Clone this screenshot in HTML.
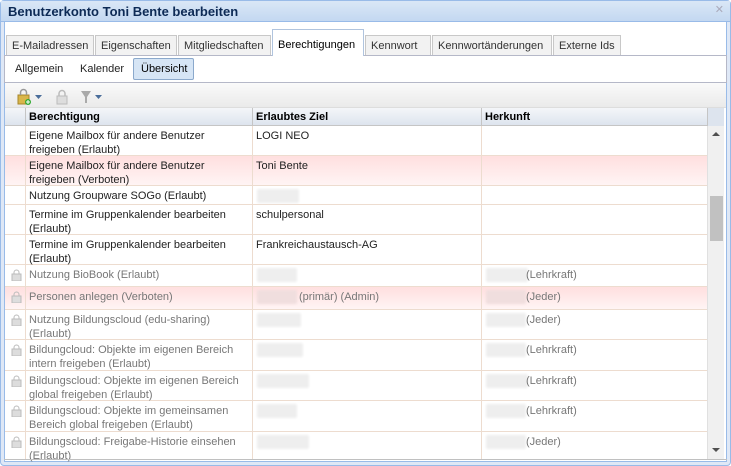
<!DOCTYPE html>
<html><head><meta charset="utf-8"><style>
*{margin:0;padding:0;box-sizing:border-box}
body{width:731px;height:466px;background:#fff;font-family:"Liberation Sans",Tahoma,sans-serif;font-size:11px;color:#222;position:relative;overflow:hidden}
.a{position:absolute}
.win{left:0;top:0;width:731px;height:466px;border:1px solid #99bbe8;border-radius:4px;background:#dfe8f6}
.title{left:1px;top:1px;width:729px;height:21px;background:linear-gradient(#dae7f6,#c3d8f1);border-bottom:1px solid #99bbe8}
.title b{position:absolute;left:7px;top:3px;font-size:13px;color:#0d2a55}
.body{left:4px;top:22px;width:723px;height:440px;background:#fff;border:1px solid #99bbe8;border-top:none}
.tab{top:35px;height:20px;border:1px solid #c8c8c8;border-bottom:none;background:#f2f2f2;color:#333;padding:4px 5px 0;white-space:nowrap;font-size:11px}
.tab.act{top:29px;height:27px;background:#fff;border-color:#b0c4de;padding-top:9px;color:#000}
.sub{left:4px;top:55px;width:723px;height:28px;border:1px solid #b5b8c8;background:#fff}
.tb{left:5px;top:83px;width:721px;height:25px;background:linear-gradient(#fafafa,#eaeaea);border-bottom:1px solid #ddd}
.hdr{left:5px;top:108px;width:703px;height:18px;background:linear-gradient(#f4f6f9,#dde4ee);border-bottom:1px solid #c5c5c5;font-weight:bold;color:#000}
.hdr span{position:absolute;top:3px}
.row{left:5px;width:703px;border-bottom:1px solid #eddccf;background:#fff}
.row.pk{background:linear-gradient(#ffdfdf,#fff4f4)}
.c1,.c2,.c3{position:absolute;top:3px;line-height:14px;white-space:nowrap}
.c1{left:24px}
.c2{left:251px}
.c3{left:480px}
.g{color:#777}
.bl{position:absolute;top:3px;height:14px;background:#eee;border-radius:2px;filter:blur(1px)}
.vl{position:absolute;top:108px;height:351px;width:1px;background:#eddccf}
.lock{position:absolute;left:6px;top:4px;width:11px;height:12px}
</style></head><body>
<div class="a win"></div>
<div class="a title"><b>Benutzerkonto Toni Bente bearbeiten</b><span style="position:absolute;right:6px;top:2px;color:#aab;font-size:11px">✕</span></div>
<div class="a body"></div>
<div class="a tab" style="left:6px;width:88px">E-Mailadressen</div>
<div class="a tab" style="left:95px;width:82px">Eigenschaften</div>
<div class="a tab" style="left:178px;width:93px">Mitgliedschaften</div>
<div class="a tab" style="left:365px;width:66px">Kennwort</div>
<div class="a tab" style="left:432px;width:120px">Kennwortänderungen</div>
<div class="a tab" style="left:553px;width:68px">Externe Ids</div>
<div class="a sub"></div>
<div class="a tab act" style="left:272px;width:92px">Berechtigungen</div>
<div class="a" style="left:15px;top:63px;color:#222">Allgemein</div>
<div class="a" style="left:80px;top:63px;color:#222">Kalender</div>
<div class="a" style="left:133px;top:58px;width:61px;height:22px;border:1px solid #8ba9cc;border-radius:2px;background:#d6e5f5;padding:4px 0 0 7px;color:#000">Übersicht</div>
<div class="a tb"></div>
<svg class="a" style="left:16px;top:88px" width="94" height="18">
<rect x="2" y="7" width="11" height="9" fill="#d9b64a" stroke="#a8862a"/><path d="M4.5 7V4.5a3 3 0 0 1 6 0V7" fill="none" stroke="#999" stroke-width="1.5"/>
<circle cx="12" cy="14" r="3" fill="#3a3"/><path d="M10 14h4M12 12v4" stroke="#fff"/>
<path d="M19 7h7l-3.5 4z" fill="#4a6d9a"/>
<rect x="41" y="8" width="10" height="8" fill="#ddd" stroke="#bbb"/><path d="M43 8V5.5a3 3 0 0 1 6 0V8" fill="none" stroke="#bbb" stroke-width="1.5"/>
<path d="M65 3h10l-4 6v6h-2V9z" fill="#aaa"/>
<path d="M79 7h7l-3.5 4z" fill="#4a6d9a"/>
</svg>
<div class="a hdr"><span style="left:24px">Berechtigung</span><span style="left:251px">Erlaubtes Ziel</span><span style="left:480px">Herkunft</span></div>
<div class="a" style="left:707px;top:108px;width:17px;height:18px;background:#dde4ee;border-left:1px solid #c5c5c5"></div>

<div class="a row" style="top:126px;height:30px"><div class="c1">Eigene Mailbox für andere Benutzer<br>freigeben (Erlaubt)</div><div class="c2">LOGI NEO</div></div>
<div class="a row pk" style="top:156px;height:30px"><div class="c1">Eigene Mailbox für andere Benutzer<br>freigeben (Verboten)</div><div class="c2">Toni Bente</div></div>
<div class="a row" style="top:186px;height:19px"><div class="c1">Nutzung Groupware SOGo (Erlaubt)</div><div class="bl" style="left:252px;width:42px"></div></div>
<div class="a row" style="top:205px;height:30px"><div class="c1">Termine im Gruppenkalender bearbeiten<br>(Erlaubt)</div><div class="c2">schulpersonal</div></div>
<div class="a row" style="top:235px;height:30px"><div class="c1">Termine im Gruppenkalender bearbeiten<br>(Erlaubt)</div><div class="c2">Frankreichaustausch-AG</div></div>
<div class="a row g" style="top:265px;height:22px"><svg class="lock"><rect x="1" y="5" width="9" height="7" fill="#ddd" stroke="#bbb"/><path d="M3 5V3.5a2.5 2.5 0 0 1 5 0V5" fill="none" stroke="#bbb"/></svg><div class="c1">Nutzung BioBook (Erlaubt)</div><div class="bl" style="left:252px;width:40px"></div><div class="bl" style="left:481px;width:42px"></div><div class="c3" style="left:521px">(Lehrkraft)</div></div>
<div class="a row pk g" style="top:287px;height:23px"><svg class="lock"><rect x="1" y="5" width="9" height="7" fill="#ddd" stroke="#bbb"/><path d="M3 5V3.5a2.5 2.5 0 0 1 5 0V5" fill="none" stroke="#bbb"/></svg><div class="c1">Personen anlegen (Verboten)</div><div class="bl" style="left:252px;width:40px;background:#f0dede"></div><div class="c2" style="left:294px">(primär) (Admin)</div><div class="bl" style="left:481px;width:40px;background:#f0dede"></div><div class="c3" style="left:521px">(Jeder)</div></div>
<div class="a row g" style="top:310px;height:30px"><svg class="lock"><rect x="1" y="5" width="9" height="7" fill="#ddd" stroke="#bbb"/><path d="M3 5V3.5a2.5 2.5 0 0 1 5 0V5" fill="none" stroke="#bbb"/></svg><div class="c1">Nutzung Bildungscloud (edu-sharing)<br>(Erlaubt)</div><div class="bl" style="left:252px;width:44px"></div><div class="bl" style="left:481px;width:40px"></div><div class="c3" style="left:521px">(Jeder)</div></div>
<div class="a row g" style="top:340px;height:31px"><svg class="lock"><rect x="1" y="5" width="9" height="7" fill="#ddd" stroke="#bbb"/><path d="M3 5V3.5a2.5 2.5 0 0 1 5 0V5" fill="none" stroke="#bbb"/></svg><div class="c1">Bildungcloud: Objekte im eigenen Bereich<br>intern freigeben (Erlaubt)</div><div class="bl" style="left:252px;width:46px"></div><div class="bl" style="left:481px;width:40px"></div><div class="c3" style="left:521px">(Lehrkraft)</div></div>
<div class="a row g" style="top:371px;height:30px"><svg class="lock"><rect x="1" y="5" width="9" height="7" fill="#ddd" stroke="#bbb"/><path d="M3 5V3.5a2.5 2.5 0 0 1 5 0V5" fill="none" stroke="#bbb"/></svg><div class="c1">Bildungscloud: Objekte im eigenen Bereich<br>global freigeben (Erlaubt)</div><div class="bl" style="left:252px;width:52px"></div><div class="bl" style="left:481px;width:42px"></div><div class="c3" style="left:521px">(Lehrkraft)</div></div>
<div class="a row g" style="top:401px;height:31px"><svg class="lock"><rect x="1" y="5" width="9" height="7" fill="#ddd" stroke="#bbb"/><path d="M3 5V3.5a2.5 2.5 0 0 1 5 0V5" fill="none" stroke="#bbb"/></svg><div class="c1">Bildungscloud: Objekte im gemeinsamen<br>Bereich global freigeben (Erlaubt)</div><div class="bl" style="left:252px;width:40px"></div><div class="bl" style="left:481px;width:40px"></div><div class="c3" style="left:521px">(Lehrkraft)</div></div>
<div class="a row g" style="top:432px;height:27px;border-bottom:none"><svg class="lock"><rect x="1" y="5" width="9" height="7" fill="#ddd" stroke="#bbb"/><path d="M3 5V3.5a2.5 2.5 0 0 1 5 0V5" fill="none" stroke="#bbb"/></svg><div class="c1">Bildungscloud: Freigabe-Historie einsehen<br>(Erlaubt)</div><div class="bl" style="left:252px;width:52px"></div><div class="bl" style="left:481px;width:40px"></div><div class="c3" style="left:521px">(Jeder)</div></div>

<div class="vl" style="left:25px;top:126px;height:333px"></div>
<div class="vl" style="left:252px"></div>
<div class="vl" style="left:481px"></div>
<div class="a" style="left:25px;top:108px;width:1px;height:18px;background:#c5c5c5"></div>
<div class="a" style="left:252px;top:108px;width:1px;height:18px;background:#c5c5c5"></div>
<div class="a" style="left:481px;top:108px;width:1px;height:18px;background:#c5c5c5"></div>

<div class="a" style="left:707px;top:126px;width:17px;height:333px;background:#f0f0f0;border-left:1px solid #e0e0e0"></div>
<div class="a" style="left:710px;top:196px;width:13px;height:45px;background:#c1c1c1"></div>
<svg class="a" style="left:710px;top:130px" width="12" height="8"><path d="M2 6h8L6 2z" fill="#505050"/></svg>
<svg class="a" style="left:710px;top:446px" width="12" height="8"><path d="M2 2h8L6 6z" fill="#505050"/></svg>
<div class="a" style="left:4px;top:459px;width:723px;height:1px;background:#c0c0c0"></div>
</body></html>
